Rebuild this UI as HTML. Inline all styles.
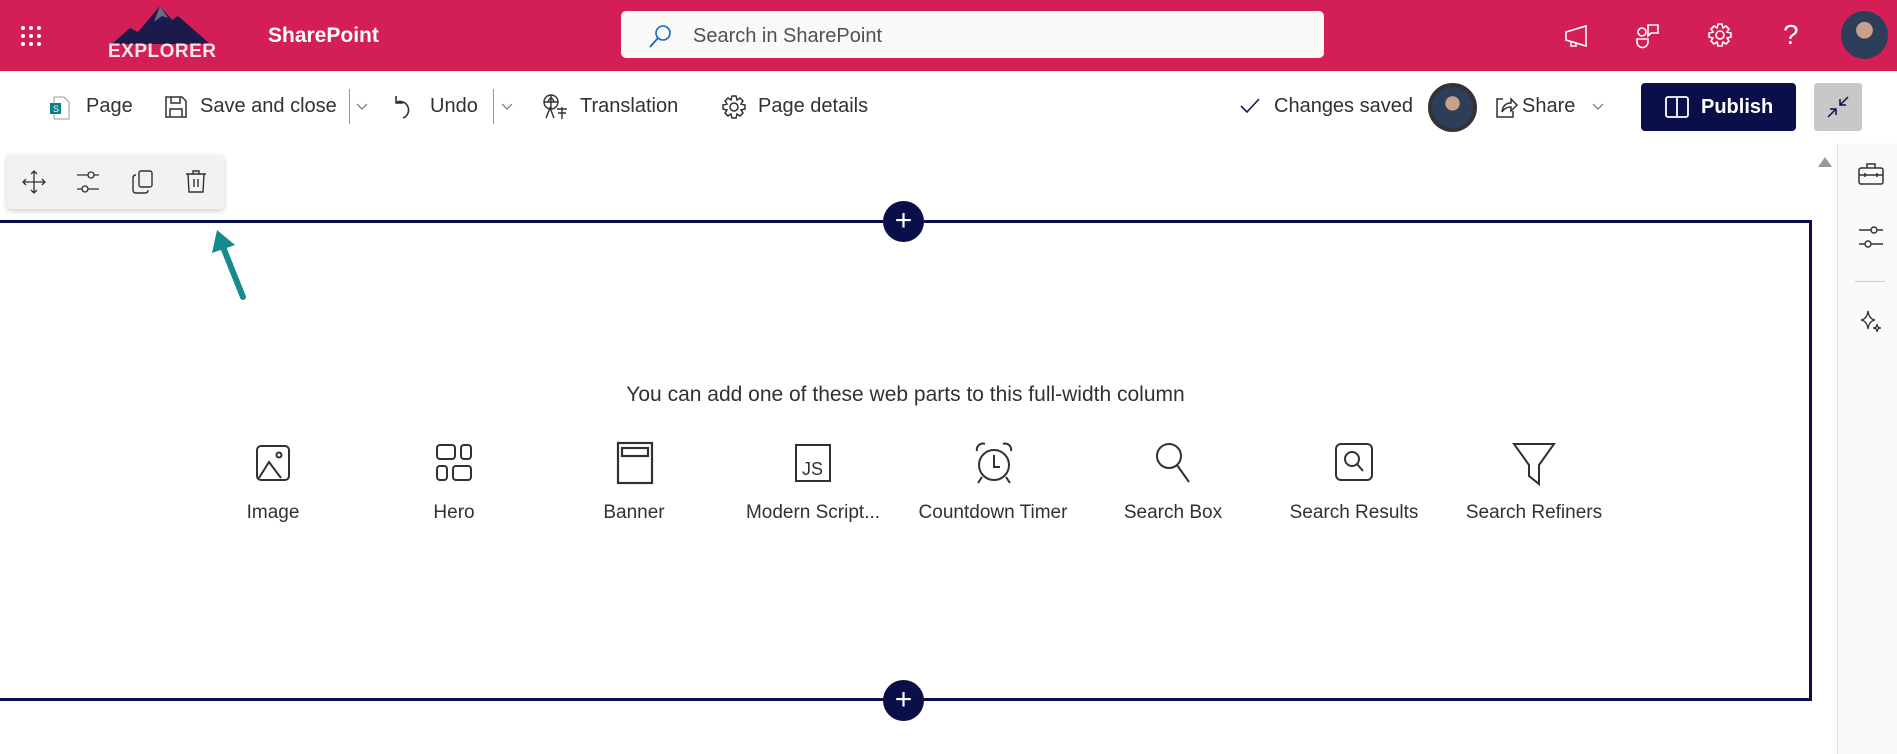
<!DOCTYPE html>
<html><head><meta charset="utf-8"><style>
*{margin:0;padding:0;box-sizing:border-box}
body{width:1897px;height:754px;overflow:hidden;background:#fff;font-family:"Liberation Sans",sans-serif;color:#323130;position:relative}
.abs{position:absolute}
.hdr{left:0;top:0;width:1897px;height:71px;background:#d31f55}
.tb{font-size:20px;color:#323130;top:95px;white-space:nowrap}
.lbl{font-size:19px;color:#323130;top:502px;width:180px;text-align:center}
svg{position:absolute;overflow:visible}
</style></head><body>
<div class="abs hdr"></div>
<svg style="left:20px;top:25px" width="22" height="22"><g fill="#fff"><circle cx="3" cy="3" r="2"/><circle cx="11" cy="3" r="2"/><circle cx="19" cy="3" r="2"/><circle cx="3" cy="11" r="2"/><circle cx="11" cy="11" r="2"/><circle cx="19" cy="11" r="2"/><circle cx="3" cy="19" r="2"/><circle cx="11" cy="19" r="2"/><circle cx="19" cy="19" r="2"/></g></svg>
<svg style="left:112px;top:6px" width="100" height="40"><path d="M0 38 L18 22 L26 26 L48 0 L60 14 L66 10 L98 38 Z" fill="#1b1a4a"/><path d="M48 0 L42 16 L50 10 L56 12 Z" fill="#fff" opacity=".35"/></svg>
<div class="abs" style="left:108px;top:41px;font-size:19px;font-weight:bold;color:#f3e6ea;letter-spacing:0.5px">EXPLORER</div>
<div class="abs" style="left:268px;top:24px;font-size:21px;font-weight:bold;color:#fff">SharePoint</div>
<div class="abs" style="left:621px;top:11px;width:703px;height:47px;background:#faf9f8;border-radius:5px"></div>
<svg style="left:648px;top:24px" width="24" height="24"><circle cx="15" cy="9" r="7" fill="none" stroke="#0f6cbd" stroke-width="1.6"/><path d="M10 14 L2 23" stroke="#0f6cbd" stroke-width="1.8"/></svg>
<div class="abs" style="left:693px;top:25px;font-size:20px;color:#505050">Search in SharePoint</div>
<svg style="left:1564px;top:24px" width="26" height="24" fill="none" stroke="#fff" stroke-width="1.6"><path d="M2 8 L22 2 V22 L2 16 Z M7 17 V22 H12 V19"/></svg>
<svg style="left:1636px;top:24px" width="26" height="24" fill="none" stroke="#fff" stroke-width="1.6"><circle cx="6" cy="8" r="4"/><path d="M1 15 H12 V18 A5 5 0 0 1 1 18 Z M12 1 H22 V9 H15 L12 12 Z"/></svg>
<svg style="left:1707px;top:22px" width="26" height="26" fill="none" stroke="#fff" stroke-width="1.6"><circle cx="13" cy="13" r="4"/><path d="M11 2 H15 L16 6 L19 4 L22 7 L20 10 L24 11 V15 L20 16 L22 19 L19 22 L16 20 L15 24 H11 L10 20 L7 22 L4 19 L6 16 L2 15 V11 L6 10 L4 7 L7 4 L10 6 Z"/></svg>
<div class="abs" style="left:1783px;top:19px;font-size:28px;color:#fff">?</div>
<div class="abs" style="left:1841px;top:11px;width:47px;height:48px;border-radius:50%;background:radial-gradient(circle at 50% 40%,#c9a08a 0 22%,#2d3e5a 23% 100%)"></div>
<svg style="left:50px;top:96px" width="20" height="24"><path d="M4 1 H14 L19 6 V23 H4 Z" fill="#fff" stroke="#999"/><rect x="0" y="7" width="11" height="11" fill="#038387"/><text x="3" y="16" font-size="9" fill="#fff" font-family="Liberation Sans">S</text></svg>
<div class="abs tb" style="left:86px">Page</div>
<svg style="left:164px;top:95px" width="24" height="24" fill="none" stroke="#323130" stroke-width="1.5"><path d="M2 2 H18 L22 6 V22 H2 Z M7 2 V8 H16 V2 M6 22 V14 H18 V22"/></svg>
<div class="abs tb" style="left:200px">Save and close</div>
<div class="abs" style="left:349px;top:89px;width:1px;height:35px;background:#999"></div>
<svg style="left:356px;top:103px" width="12" height="8" fill="none" stroke="#666"><path d="M1 1 L6 6 L11 1"/></svg>
<svg style="left:394px;top:94px" width="22" height="26" fill="none" stroke="#323130" stroke-width="1.6"><path d="M2 2 V9 H9 M3 8 A8 8 0 1 1 9 24"/></svg>
<div class="abs tb" style="left:430px">Undo</div>
<div class="abs" style="left:493px;top:89px;width:1px;height:35px;background:#999"></div>
<svg style="left:501px;top:103px" width="12" height="8" fill="none" stroke="#666"><path d="M1 1 L6 6 L11 1"/></svg>
<svg style="left:543px;top:94px" width="26" height="26" fill="none" stroke="#323130" stroke-width="1.4"><circle cx="8" cy="8" r="7"/><path d="M1 8 H15 M8 1 V15 M5 8 Q8 0 11 8 M3 24 L7 14 L11 24 M14 15 H24 M19 13 V25 M15 19 H23"/></svg>
<div class="abs tb" style="left:580px">Translation</div>
<svg style="left:721px;top:94px" width="26" height="26" fill="none" stroke="#323130" stroke-width="1.5"><circle cx="13" cy="13" r="4"/><path d="M11 2 H15 L16 6 L19 4 L22 7 L20 10 L24 11 V15 L20 16 L22 19 L19 22 L16 20 L15 24 H11 L10 20 L7 22 L4 19 L6 16 L2 15 V11 L6 10 L4 7 L7 4 L10 6 Z"/></svg>
<div class="abs tb" style="left:758px">Page details</div>
<svg style="left:1240px;top:98px" width="20" height="16" fill="none" stroke="#1b1a4a" stroke-width="1.6"><path d="M1 8 L7 14 L19 1"/></svg>
<div class="abs tb" style="left:1274px">Changes saved</div>
<div class="abs" style="left:1428px;top:83px;width:49px;height:49px;border-radius:50%;border:4px solid #333;background:radial-gradient(circle at 50% 40%,#c9a08a 0 22%,#2d3e5a 23% 100%)"></div>
<svg style="left:1494px;top:96px" width="24" height="24" fill="none" stroke="#323130" stroke-width="1.5"><path d="M9 3 H3 V21 H19 V15 M8 16 Q9 7 17 7 V3 L23 9 L17 15 V11 Q11 11 8 16"/></svg>
<div class="abs tb" style="left:1522px">Share</div>
<svg style="left:1592px;top:103px" width="12" height="8" fill="none" stroke="#666"><path d="M1 1 L6 6 L11 1"/></svg>
<div class="abs" style="left:1641px;top:83px;width:155px;height:48px;background:#0a0f4a;border-radius:4px"></div>
<svg style="left:1665px;top:96px" width="24" height="22" fill="none" stroke="#fff" stroke-width="1.8"><rect x="1" y="1" width="22" height="20" rx="2"/><path d="M12 1 V21"/></svg>
<div class="abs" style="left:1701px;top:96px;font-size:20px;font-weight:bold;color:#fff">Publish</div>
<div class="abs" style="left:1814px;top:83px;width:48px;height:48px;background:#c8c8c8;border-radius:3px"></div>
<svg style="left:1826px;top:95px" width="24" height="24" fill="none" stroke="#0a0f4a" stroke-width="1.5"><path d="M22 2 L14 10 M14 4 V10 H20 M2 22 L10 14 M4 14 H10 V20"/></svg>
<div class="abs" style="left:1837px;top:143px;width:1px;height:611px;background:#e1e1e1"></div>
<div class="abs" style="left:1838px;top:143px;width:59px;height:611px;background:#fafafa"></div>
<svg style="left:1818px;top:155px" width="14" height="12"><path d="M0 12 L7 2 L14 12 Z" fill="#999"/></svg>
<svg style="left:1858px;top:163px" width="26" height="22" fill="none" stroke="#323130" stroke-width="1.5"><rect x="1" y="5" width="24" height="16" rx="2"/><path d="M9 5 V1 H17 V5 M1 12 H25 M7 10 V14 M19 10 V14"/></svg>
<svg style="left:1858px;top:225px" width="26" height="24" fill="none" stroke="#323130" stroke-width="1.4"><path d="M1 5 H25 M1 19 H25"/><circle cx="16" cy="5" r="3" fill="#fafafa"/><circle cx="10" cy="19" r="3" fill="#fafafa"/></svg>
<div class="abs" style="left:1855px;top:281px;width:30px;height:1px;background:#ccc"></div>
<svg style="left:1860px;top:310px" width="22" height="24" fill="none" stroke="#323130" stroke-width="1.3"><path d="M8 1 Q9 9 15 10 Q9 11 8 19 Q7 11 1 10 Q7 9 8 1 Z M17 14 Q17 18 21 18 Q17 18 17 22 Q17 18 13 18 Q17 18 17 14 Z"/></svg>
<div class="abs" style="left:-4px;top:220px;width:1816px;height:481px;border:3px solid #0a0f4a"></div>
<div class="abs" style="left:883px;top:201px;width:41px;height:41px;border-radius:50%;background:#0a0f4a;color:#fff;font-size:30px;line-height:39px;text-align:center">+</div>
<div class="abs" style="left:883px;top:680px;width:41px;height:41px;border-radius:50%;background:#0a0f4a;color:#fff;font-size:30px;line-height:39px;text-align:center">+</div>
<div class="abs" style="left:7px;top:155px;width:217px;height:54px;background:#f3f2f1;border-radius:4px;box-shadow:0 2px 6px rgba(0,0,0,.2)"></div>
<svg style="left:22px;top:170px" width="24" height="24" fill="none" stroke="#323130" stroke-width="1.3"><path d="M12 1 V23 M1 12 H23 M9 4 L12 1 L15 4 M9 20 L12 23 L15 20 M4 9 L1 12 L4 15 M20 9 L23 12 L20 15"/></svg>
<svg style="left:76px;top:170px" width="24" height="24" fill="none" stroke="#323130" stroke-width="1.3"><path d="M1 5 H23 M1 19 H23"/><circle cx="15" cy="5" r="3" fill="#f3f2f1"/><circle cx="9" cy="19" r="3" fill="#f3f2f1"/></svg>
<svg style="left:132px;top:170px" width="22" height="24" fill="none" stroke="#323130" stroke-width="1.4"><rect x="7" y="1" width="13" height="16" rx="2"/><path d="M4 5 Q1 5 1 8 V20 Q1 23 4 23 H13 Q16 23 16 20"/></svg>
<svg style="left:185px;top:169px" width="22" height="26" fill="none" stroke="#323130" stroke-width="1.4"><path d="M1 5 H21 M8 5 V2 H14 V5 M3 5 L4 23 H18 L19 5 M9 10 V18 M13 10 V18"/></svg>
<svg style="left:205px;top:225px" width="50" height="80"><path d="M38 72 L18 22" stroke="#158b8f" stroke-width="6" stroke-linecap="round"/><path d="M7 28 L12 5 L30 20 Z" fill="#158b8f"/></svg>
<div class="abs" style="left:0;top:383px;width:1811px;text-align:center;font-size:21px;color:#323130">You can add one of these web parts to this full-width column</div>
<svg style="left:256px;top:445px" width="34" height="36" fill="none" stroke="#323130" stroke-width="2"><rect x="1" y="1" width="32" height="34" rx="4"/><circle cx="23" cy="10" r="2.5"/><path d="M3 33 L13 17 L25 33"/></svg>
<svg style="left:436px;top:444px" width="36" height="38" fill="none" stroke="#323130" stroke-width="2"><rect x="1" y="1" width="18" height="14" rx="3"/><rect x="25" y="1" width="10" height="14" rx="3"/><rect x="1" y="22" width="10" height="14" rx="3"/><rect x="17" y="22" width="18" height="14" rx="3"/></svg>
<svg style="left:617px;top:442px" width="36" height="42" fill="none" stroke="#323130" stroke-width="2.2"><rect x="1" y="1" width="34" height="40"/><rect x="5" y="6" width="26" height="8"/></svg>
<svg style="left:795px;top:444px" width="36" height="38" fill="none" stroke="#323130" stroke-width="2"><rect x="1" y="1" width="34" height="36"/><text x="7" y="31" font-size="18" fill="#323130" stroke="none" font-family="Liberation Sans">JS</text></svg>
<svg style="left:973px;top:441px" width="42" height="44" fill="none" stroke="#323130" stroke-width="2"><circle cx="21" cy="24" r="15"/><path d="M21 14 V26 H27 M4 10 A6 6 0 0 1 12 3 M38 10 A6 6 0 0 0 30 3 M9 36 L5 42 M33 36 L37 42"/></svg>
<svg style="left:1155px;top:442px" width="36" height="42" fill="none" stroke="#323130" stroke-width="2"><circle cx="14" cy="14" r="12"/><path d="M22 23 L34 40"/></svg>
<svg style="left:1335px;top:443px" width="38" height="40" fill="none" stroke="#323130" stroke-width="2"><rect x="1" y="1" width="36" height="36" rx="5"/><circle cx="17" cy="16" r="7"/><path d="M22 21 L28 28"/></svg>
<svg style="left:1513px;top:443px" width="42" height="42" fill="none" stroke="#323130" stroke-width="2"><path d="M1 1 H41 L26 22 V41 L16 33 V22 Z"/></svg>
<div class="abs lbl" style="left:183px">Image</div>
<div class="abs lbl" style="left:364px">Hero</div>
<div class="abs lbl" style="left:544px">Banner</div>
<div class="abs lbl" style="left:723px">Modern Script...</div>
<div class="abs lbl" style="left:883px;width:220px">Countdown Timer</div>
<div class="abs lbl" style="left:1083px">Search Box</div>
<div class="abs lbl" style="left:1264px">Search Results</div>
<div class="abs lbl" style="left:1444px">Search Refiners</div>
</body></html>
